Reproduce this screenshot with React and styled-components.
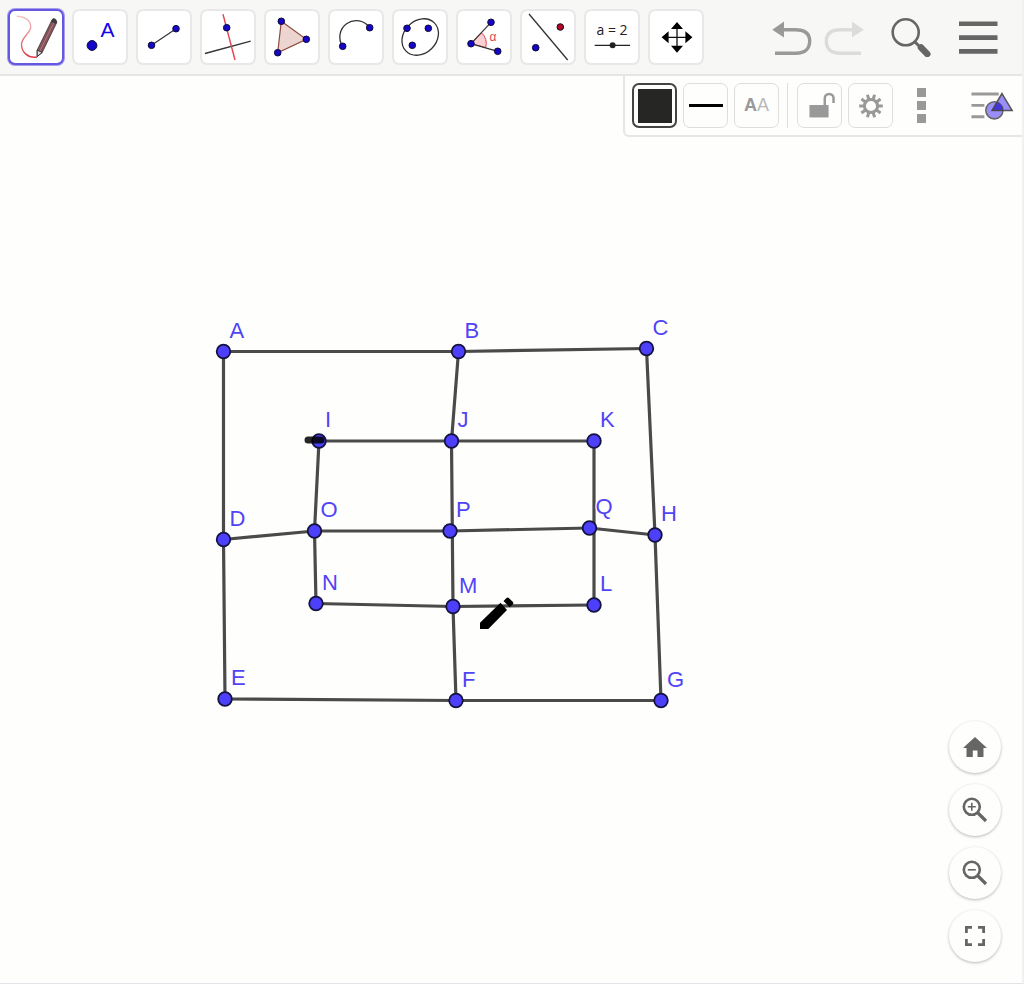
import {useState} from 'react';
import styled, {createGlobalStyle} from 'styled-components';

const GlobalStyle = createGlobalStyle`
    *{
        box-sizing:border-box;
    }
    body{
        margin:0;
        background-color:#fefefd;
        font-family:'Liberation Sans', Arial, sans-serif;
    }
    button{
        font-family:inherit;
        cursor:pointer;
    }
`;

const Page = styled.div`
    min-height:100vh;
    display:flex;
    flex-direction:column;
    border-right:2px solid #f1f1f3;
    border-bottom:1px solid #e3e3e8;
`;

const Header = styled.header`
    display:flex;
    align-items:center;
    justify-content:space-between;
    padding:9px 24px 9px 8px;
    background-color:#f7f7f6;
    border-bottom:2px solid #e6e6e6;
`;

const Tools = styled.div`
    display:flex;
    gap:8px;
`;

const ToolButton = styled.button`
    width:56px;
    height:56px;
    padding:0px;
    border:2px solid ${props=>props.$active ? '#6557e0' : '#e8e8e8'};
    box-shadow:${props=>props.$active ? '0px 0px 0px 1px #a79fec' : 'none'};
    border-radius:7px;
    background-color:#fff;

    svg{
        display:block;
        width:100%;
        height:100%;
    }
`;

const Actions = styled.div`
    display:flex;
    align-items:center;
    gap:${props=>props.$gap}px;
`;

const ActionButton = styled.button`
    width:40px;
    height:40px;
    padding:0px;
    border:0px;
    background:none;

    svg{
        display:block;
    }
`;

const Board = styled.main`
    flex:1;
    display:grid;
    grid-template-rows:auto 1fr;
    grid-template-columns:1fr;
`;

const Drawing = styled.svg`
    grid-area:1 / 1 / 3 / 2;
    width:100%;
    height:100%;
    min-height:640px;
`;

const PointLabel = styled.text`
    font-size:22px;
    fill:#5144f5;
    stroke:#fefefd;
    stroke-width:2;
    paint-order:stroke;
`;

const StyleBar = styled.div`
    grid-area:1 / 1 / 2 / 2;
    justify-self:end;
    z-index:1;
    display:flex;
    align-items:center;
    gap:6px;
    padding:7px 7px 7px 7px;
    background-color:#fefefd;
    border:solid #e6e6e6;
    border-width:0px 0px 2px 2px;
    border-bottom-left-radius:6px;
`;

const StyleButton = styled.button`
    width:45px;
    height:45px;
    padding:0px;
    border:${props=>props.$active ? '2px solid #444' : '1px solid #dedede'};
    border-color:${props=>props.$plain && 'transparent'};
    border-radius:7px;
    background-color:#fefefd;
    display:flex;
    align-items:center;
    justify-content:center;
    flex-shrink:0;
    margin-left:${props=>props.$spaced ? '20px' : '0px'};
`;

const Divider = styled.span`
    width:1px;
    height:45px;
    margin:0px 3px 0px 2px;
    background-color:#dedede;
`;

const ColorSwatch = styled.span`
    width:34px;
    height:34px;
    background-color:#262624;
`;

const LineSample = styled.span`
    width:34px;
    height:3px;
    background-color:#000;
`;

const TextSample = styled.span`
    font-size:18px;
    font-weight:${props=>props.$bold ? 'bold' : 'normal'};
    color:${props=>props.$bold ? '#999' : '#b8b8b8'};
`;

const ViewControls = styled.nav`
    grid-area:2 / 1 / 3 / 2;
    justify-self:end;
    align-self:end;
    z-index:1;
    display:flex;
    flex-direction:column;
    gap:11px;
    padding:0px 21px 21px 0px;
`;

const RoundButton = styled.button`
    width:52px;
    height:52px;
    padding:0px;
    border:0px;
    border-radius:50%;
    background-color:#fefefd;
    box-shadow:0px 1px 3px rgba(0,0,0,0.28);
    display:flex;
    align-items:center;
    justify-content:center;
`;

const points = {
    A:[223.5, 275.5], B:[458.5, 275.5], C:[646.5, 272.5],
    D:[223.5, 463.5], E:[225, 623], F:[456, 624.5],
    G:[661, 624.5], H:[655, 459], I:[319, 365],
    J:[451.5, 365], K:[594, 365], L:[594, 529],
    M:[453, 530.5], N:[316, 527.5], O:[314.5, 455],
    P:[450, 455], Q:[589.5, 452],
};

// J-M and K-L run straight past P and Q
const segments = ['AB', 'BC', 'CH', 'HG', 'GF', 'FE', 'ED', 'DA', 'BJ', 'JM', 'MF', 'IJ', 'JK', 
                  'KL', 'LM', 'MN', 'NO', 'OI', 'DO', 'OP', 'PQ', 'QH'];

function Dot({x, y, r = 3.3, fill = '#1505c9'}){
    return <circle cx={x} cy={y} r={r} fill={fill} stroke="#0c0c35" strokeWidth="1"/>;
}

const tools = [
    {name:'Pen', icon:<>
        <defs>
            <linearGradient id="pen-trail" x1="0" y1="0" x2="0" y2="1">
                <stop offset="0" stopColor="#f3c6c8"/>
                <stop offset="1" stopColor="#df3a48"/>
            </linearGradient>
        </defs>
        <path d="M8.7 7.3C16 7 22.7 11 22.7 18C22.7 24 13.5 28 13.5 35.5C13.5 43 20 49.5 29 48" fill="none" stroke="url(#pen-trail)" strokeWidth="1.4"/>
        <path d="M44.2 10.5L49 13L34.2 43.5L29.2 47.5L29.2 41Z" fill="#84545a" stroke="#443336" strokeWidth="0.8"/>
        <path d="M46.8 11.8L31.8 42.2" stroke="#ad7780" strokeWidth="1"/>
        <path d="M44.2 10.5C44.7 8 48.8 9.2 49 12.8L48 15L43.1 12.8Z" fill="#3d3d3d"/>
        <path d="M29.2 41L34.2 43.5L29.2 47.5Z" fill="#ddd" stroke="#333" strokeWidth="1"/>
    </>},
    {name:'Point', icon:<>
        <Dot x={20} y={36.5} r={4.9}/>
        <text x="28.5" y="27.5" fontSize="21" fill="#1505e9">A</text>
    </>},
    {name:'Segment', icon:<>
        <path d="M15.5 36.3L40 19.7" stroke="#333" strokeWidth="1.2"/>
        <Dot x={15.5} y={36.3}/>
        <Dot x={40} y={19.7}/>
    </>},
    {name:'Perpendicular line', icon:<>
        <path d="M5 44.5L50.7 32.2" stroke="#333" strokeWidth="1.3"/>
        <path d="M23 5.3L35 51" stroke="#e04550" strokeWidth="1.4"/>
        <Dot x={26.7} y={18.7}/>
    </>},
    {name:'Polygon', icon:<>
        <path d="M17.3 12.3L42.3 30.3L13.7 43.7Z" fill="#ecd5d0" stroke="#8e4a3c" strokeWidth="1.2"/>
        <Dot x={17.3} y={12.3}/>
        <Dot x={42.3} y={30.3}/>
        <Dot x={13.7} y={43.7}/>
    </>},
    {name:'Circular arc', icon:<>
        <path d="M14.7 37.3A16.3 16.3 0 0 1 41.7 18.7" fill="none" stroke="#333" strokeWidth="1.3"/>
        <Dot x={14.7} y={37.3}/>
        <Dot x={41.7} y={18.7}/>
    </>},
    {name:'Ellipse', icon:<>
        <ellipse cx="28.2" cy="28" rx="20" ry="16.3" transform="rotate(-45 28.2 28)" fill="none" stroke="#333" strokeWidth="1.3"/>
        <Dot x={15} y={19.3}/>
        <Dot x={36.3} y={19.3}/>
        <Dot x={20.3} y={36.3}/>
    </>},
    {name:'Angle', icon:<>
        <path d="M15 34.7L25.5 23.8A15 15 0 0 1 29.7 38.6Z" fill="#fbd0d2" stroke="#e04550" strokeWidth="1"/>
        <path d="M35 13.3L15 34.7L41.7 42.3" fill="none" stroke="#333" strokeWidth="1.2"/>
        <Dot x={35} y={13.3}/>
        <Dot x={15} y={34.7}/>
        <Dot x={41.7} y={42.3}/>
        <text x="33.5" y="31.5" fontSize="12" fill="#e04550">α</text>
    </>},
    {name:'Reflection', icon:<>
        <path d="M9 5L47.7 51" stroke="#333" strokeWidth="1.3"/>
        <Dot x={40.3} y={18} fill="#b5061f"/>
        <Dot x={15.7} y={38.7}/>
    </>},
    {name:'Slider', icon:<>
        <text x="12.5" y="26" fontSize="14" fontFamily="'Open Sans', sans-serif" fill="#222">a = 2</text>
        <path d="M10.7 36.3H46" stroke="#222" strokeWidth="1.3"/>
        <circle cx="28.6" cy="36.3" r="3" fill="#222"/>
    </>},
    {name:'Move view', icon:<>
        <path d="M29 17V40M18 28.3H40" stroke="#111" strokeWidth="1.3"/>
        <path d="M29 13L35 20H23ZM29 43.7L35 36.7H23ZM13.6 28.3L20.6 22.3V34.3ZM44.4 28.3L37.4 22.3V34.3Z" fill="#000"/>
    </>},
];

function UndoIcon({color, flip}){
    return(
        <svg width="40" height="40" viewBox="0 0 40 40">
            <g transform={flip ? 'translate(40 0) scale(-1 1)' : undefined}>
                <path d="M0.3 12.7L12 4.5V20.5Z" fill={color}/>
                <path d="M11 12.7H23C33 12.7 37.7 17 37.7 24C37.7 31.5 33 36.2 24 36.2H3" fill="none" stroke={color} strokeWidth="3.4"/>
            </g>
        </svg>
    )
}

function LockIcon(){
    return(
        <svg width="45" height="45" viewBox="0 0 45 45">
            <rect x="12" y="22" width="20" height="13" fill="#999"/>
            <path d="M28 22.5V15A4.6 4.6 0 0 1 37.2 15V20" fill="none" stroke="#999" strokeWidth="2.6"/>
        </svg>
    )
}

function GearIcon(){
    return(
        <svg width="26" height="26" viewBox="-13 -13 26 26">
            <circle r="6.6" fill="none" stroke="#999" strokeWidth="3"/>
            {
                [18, 54, 90, 126, 162, 198, 234, 270, 306, 342].map(a=><rect key={a} x="-1.5" y="-11.8" width="3" height="5" fill="#999" transform={`rotate(${a})`}/>)
            }
        </svg>
    )
}

function AlgebraIcon(){
    return(
        <svg width="45" height="45" viewBox="0 0 45 45">
            <path d="M0.5 10.5H29M0.5 22.3H14M0.5 34.3H14" stroke="#999" strokeWidth="3"/>
            <circle cx="24.5" cy="27.5" r="9" fill="#9a8ff8" stroke="#666" strokeWidth="1.6"/>
            <path d="M32.4 10L43 27.7H22Z" fill="#9a8ff8" stroke="#555" strokeWidth="1.6"/>
            <path d="M27.5 19A9 9 0 0 1 33.5 27.5H22.3Z" fill="#4335d8" stroke="#444" strokeWidth="1"/>
        </svg>
    )
}

function Zoom({plus}){
    return(
        <svg width="26" height="26" viewBox="0 0 26 26" fill="none" stroke="#666">
            <circle cx="9.8" cy="9.8" r="8" strokeWidth="2.6"/>
            <path d="M15.5 15.5L24 24" strokeWidth="3.2"/>
            <path d={plus ? 'M5.8 9.8H13.8M9.8 5.8V13.8' : 'M5.8 9.8H13.8'} strokeWidth="1.6"/>
        </svg>
    )
}

function Construction(){
    return(
        <Drawing role="img" aria-label="Construction">
            <g stroke="#4a4a4a" strokeWidth="3.2" strokeLinecap="round">
                {
                    segments.map(s=>{
                        const [from, to] = [points[s[0]], points[s[1]]];
                        return <line key={s} x1={from[0]} y1={from[1]} x2={to[0]} y2={to[1]}/>
                    })
                }
            </g>
            {
                Object.entries(points).map(([name, [x, y]])=>(
                    <g key={name}>
                        <PointLabel x={x + 6} y={y - 14}>{name}</PointLabel>
                        <circle cx={x} cy={y} r="6.8" fill="#4d40fb" stroke="#15123f" strokeWidth="1.8"/>
                    </g>
                ))
            }
            <path d="M308 364H321" stroke="#000" strokeOpacity="0.85" strokeWidth="7" strokeLinecap="round"/>
            <path d="M480 546.7L500.5 526.8L507 534L488.3 553H480Z"/>
            <path d="M503.5 525L506.5 522Q508 521 509.3 522.4L512.7 525.8Q514 527.3 512.7 528.5L509.7 531.3Z"/>
        </Drawing>
    )
}

function App(){
    const [tool, setTool] = useState('Pen');

    return(
        <Page>
            <GlobalStyle/>
            <Header>
                <Tools>
                    {
                        tools.map(t=>(
                            <ToolButton key={t.name} aria-label={t.name} $active={t.name === tool} onClick={()=>setTool(t.name)}>
                                <svg viewBox="2 2 52 52">{t.icon}</svg>
                            </ToolButton>
                        ))
                    }
                </Tools>
                <Actions $gap={27}>
                    <Actions $gap={12}>
                        <ActionButton aria-label="Undo"><UndoIcon color="#999"/></ActionButton>
                        <ActionButton aria-label="Redo"><UndoIcon color="#dcdcdb" flip/></ActionButton>
                    </Actions>
                    <ActionButton aria-label="Search">
                        <svg width="40" height="40" viewBox="0 0 40 40" fill="none" stroke="#666">
                            <circle cx="14.7" cy="15.3" r="13" strokeWidth="2.6"/>
                            <path d="M24 25L28 29" strokeWidth="3"/>
                            <path d="M30 30.5L36.3 37" strokeWidth="6.5" strokeLinecap="round"/>
                        </svg>
                    </ActionButton>
                    <ActionButton aria-label="Menu">
                        <svg width="40" height="40" viewBox="0 0 40 40">
                            <path d="M1 6.8H39.5M1 20.6H39.5M1 34.4H39.5" stroke="#666" strokeWidth="4.6"/>
                        </svg>
                    </ActionButton>
                </Actions>
            </Header>
            <Board>
                <Construction/>
                <StyleBar>
                    <StyleButton aria-label="Color" $active><ColorSwatch/></StyleButton>
                    <StyleButton aria-label="Line style"><LineSample/></StyleButton>
                    <StyleButton aria-label="Label style"><TextSample $bold>A</TextSample><TextSample>A</TextSample></StyleButton>
                    <Divider/>
                    <StyleButton aria-label="Lock"><LockIcon/></StyleButton>
                    <StyleButton aria-label="Settings"><GearIcon/></StyleButton>
                    <StyleButton aria-label="More" $plain>
                        <svg width="9" height="35" viewBox="0 0 9 35" fill="#999">
                            <path d="M0 0H9V9H0ZM0 13H9V22H0ZM0 26H9V35H0Z"/>
                        </svg>
                    </StyleButton>
                    <StyleButton aria-label="Algebra view" $plain $spaced><AlgebraIcon/></StyleButton>
                </StyleBar>
                <ViewControls>
                    <RoundButton aria-label="Home">
                        <svg width="24" height="20" viewBox="0 0 24 20" fill="#666">
                            <path d="M12 0L24 11H20.5V20H14.5V13.5H9.8V20H3.5V11H0Z"/>
                        </svg>
                    </RoundButton>
                    <RoundButton aria-label="Zoom in"><Zoom plus/></RoundButton>
                    <RoundButton aria-label="Zoom out"><Zoom/></RoundButton>
                    <RoundButton aria-label="Fullscreen">
                        <svg width="20" height="20" viewBox="0 0 20 20" fill="none" stroke="#666" strokeWidth="2.8">
                            <path d="M1.4 7V1.4H7M13 1.4H18.6V7M18.6 13V18.6H13M7 18.6H1.4V13"/>
                        </svg>
                    </RoundButton>
                </ViewControls>
            </Board>
        </Page>
    )
}

export default App;
